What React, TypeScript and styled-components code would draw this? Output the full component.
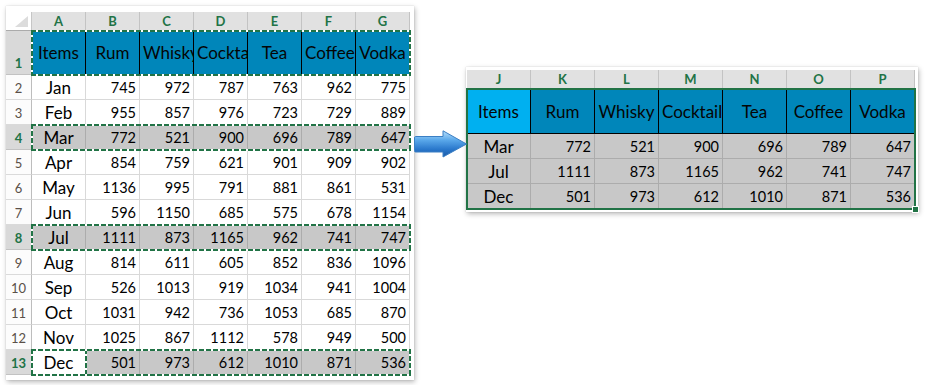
import React from "react";
import styled, { createGlobalStyle, css } from "styled-components";

const GREEN = "#217346";
const BLUE = "#0086BA";
const LIGHT_BLUE = "#00B0F0";
const SEL_GRAY = "#C8C8C8";

const Global = createGlobalStyle`
  html, body { margin: 0; padding: 0; background: #fff; }
  body { font-family: Lato, "Liberation Sans", sans-serif; }
`;

type Pos = { $r: number; $c: number };
const place = css<Pos>`
  grid-row: ${(p) => p.$r};
  grid-column: ${(p) => p.$c};
`;

const Page = styled.div`
  display: flex;
  align-items: flex-start;
  padding: 6px 0 0 6px;
  width: 926px;
  height: 385px;
  box-sizing: border-box;
  overflow: hidden;
`;

const Sheet = styled.div<{ $cols: string; $rows: string }>`
  display: grid;
  grid-template-columns: ${(p) => p.$cols};
  grid-template-rows: ${(p) => p.$rows};
  background: #fff;
  box-shadow: 1px 2px 5px rgba(0, 0, 0, 0.28), 0 0 1px rgba(0, 0, 0, 0.2);
  flex: none;
`;

const LeftSheet = styled(Sheet)`
  padding: 6px 4px 5px 0;
`;

const RightSheet = styled(Sheet)`
  margin-top: 61px;
  padding: 3px 3px 3px 1px;
`;

const Corner = styled.div<Pos>`
  ${place};
  background: #fff;
  border-right: 1px solid #c6c6c6;
  border-bottom: 1px solid #ababab;
  position: relative;
  &::after {
    content: "";
    position: absolute;
    right: 3px;
    bottom: 3px;
    width: 13px;
    height: 11px;
    background: #dcdcdc;
    clip-path: polygon(100% 0, 100% 100%, 0 100%);
  }
`;

const ColHead = styled.div<Pos>`
  ${place};
  background: #e1e1e1;
  border-right: 1px solid #c3c3c3;
  border-bottom: 1px solid #ababab;
  color: ${GREEN};
  font-weight: 700;
  font-size: 13px;
  display: flex;
  align-items: center;
  justify-content: center;
`;

const RowHead = styled.div<Pos & { $sel?: boolean }>`
  ${place};
  background: ${(p) => (p.$sel ? "#d9d9d9" : "#fcfcfc")};
  border-right: 1px solid #bdbdbd;
  border-bottom: 1px solid ${(p) => (p.$sel ? "#c2c2c2" : "#dadada")};
  color: ${(p) => (p.$sel ? GREEN : "#5a5048")};
  font-weight: ${(p) => (p.$sel ? 700 : 400)};
  font-size: 13px;
  display: flex;
  align-items: flex-end;
  justify-content: center;
  padding-bottom: 3px;
  box-sizing: border-box;
`;

const HeadCell = styled.div<Pos & { $light?: boolean }>`
  ${place};
  background: ${(p) => (p.$light ? LIGHT_BLUE : BLUE)};
  border-right: 1px solid #000;
  border-bottom: 1px solid #000;
  color: #050505;
  font-size: 17px;
  display: flex;
  align-items: center;
  justify-content: safe center;
  padding: 0 3px;
  overflow: hidden;
  white-space: nowrap;
  box-sizing: border-box;
  min-width: 0;
`;

const Cell = styled.div<Pos & { $sel?: boolean; $label?: boolean; $active?: boolean }>`
  ${place};
  background: ${(p) => (p.$active ? "#fff" : p.$sel ? SEL_GRAY : "#fff")};
  border-right: 1px solid ${(p) => (p.$sel ? "#acacac" : "#d9d9d9")};
  border-bottom: 1px solid ${(p) => (p.$sel ? "#acacac" : "#d9d9d9")};
  color: #000;
  font-size: ${(p) => (p.$label ? "17px" : "14.5px")};
  display: flex;
  align-items: center;
  justify-content: ${(p) => (p.$label ? "center" : "flex-end")};
  padding: 1px 3px 0 3px;
  white-space: nowrap;
  overflow: hidden;
  box-sizing: border-box;
  min-width: 0;
`;

const Marquee = styled.div<{ $area: string }>`
  grid-area: ${(p) => p.$area};
  position: relative;
  pointer-events: none;
  z-index: 2;
  &::before {
    content: "";
    position: absolute;
    inset: -1px;
    background:
      repeating-linear-gradient(90deg, ${GREEN} 0 5px, #fff 5px 7px) top left / 100% 2px no-repeat,
      repeating-linear-gradient(90deg, ${GREEN} 0 5px, #fff 5px 7px) bottom left / 100% 2px no-repeat,
      repeating-linear-gradient(180deg, ${GREEN} 0 5px, #fff 5px 7px) top left / 2px 100% no-repeat,
      repeating-linear-gradient(180deg, ${GREEN} 0 5px, #fff 5px 7px) top right / 2px 100% no-repeat;
  }
`;

const Selection = styled.div<{ $area: string }>`
  grid-area: ${(p) => p.$area};
  position: relative;
  pointer-events: none;
  z-index: 2;
  &::before {
    content: "";
    position: absolute;
    inset: -1px;
    border: 2px solid ${GREEN};
  }
  &::after {
    content: "";
    position: absolute;
    right: -4px;
    bottom: -4px;
    width: 5px;
    height: 5px;
    background: ${GREEN};
    border: 1px solid #fff;
  }
`;

const ArrowBox = styled.div`
  width: 52px;
  height: 28px;
  margin-top: 124px;
  flex: none;
  position: relative;
  z-index: 3;
  svg {
    display: block;
    overflow: visible;
  }
`;

const leftCols = ["A", "B", "C", "D", "E", "F", "G"];
const rightCols = ["J", "K", "L", "M", "N", "O", "P"];
const headers = ["Items", "Rum", "Whisky", "Cocktail", "Tea", "Coffee", "Vodka"];

const data: [string, number[]][] = [
  ["Jan", [745, 972, 787, 763, 962, 775]],
  ["Feb", [955, 857, 976, 723, 729, 889]],
  ["Mar", [772, 521, 900, 696, 789, 647]],
  ["Apr", [854, 759, 621, 901, 909, 902]],
  ["May", [1136, 995, 791, 881, 861, 531]],
  ["Jun", [596, 1150, 685, 575, 678, 1154]],
  ["Jul", [1111, 873, 1165, 962, 741, 747]],
  ["Aug", [814, 611, 605, 852, 836, 1096]],
  ["Sep", [526, 1013, 919, 1034, 941, 1004]],
  ["Oct", [1031, 942, 736, 1053, 685, 870]],
  ["Nov", [1025, 867, 1112, 578, 949, 500]],
  ["Dec", [501, 973, 612, 1010, 871, 536]],
];

const picked = ["Mar", "Jul", "Dec"];

function Arrow() {
  return (
    <svg width="53" height="28" viewBox="0 0 53 28">
      <defs>
        <linearGradient id="arrowFill" x1="0" y1="0" x2="0" y2="1">
          <stop offset="0" stopColor="#b9e0fb" />
          <stop offset="0.35" stopColor="#5aa8ea" />
          <stop offset="0.7" stopColor="#2a78cc" />
          <stop offset="1" stopColor="#1a5aa6" />
        </linearGradient>
      </defs>
      <path
        d="M1.5 6.5 Q0.5 6.5 0.5 8 L0.5 20.5 Q0.5 22 1.5 22 L29 22 L29 27 L52.5 14 L29 0.8 L29 6.5 Z"
        fill="url(#arrowFill)"
        stroke="#3b7fc4"
        strokeWidth="1"
        strokeLinejoin="round"
      />
    </svg>
  );
}

export default function App() {
  const rightRows = data.filter(([m]) => picked.includes(m));
  return (
    <>
      <Global />
      <Page>
        <LeftSheet $cols="26px repeat(7, 54px)" $rows="19px 44px repeat(12, 25px)">
          <Corner $r={1} $c={1} />
          {leftCols.map((c, j) => (
            <ColHead key={c} $r={1} $c={j + 2}>
              {c}
            </ColHead>
          ))}
          <RowHead $sel $r={2} $c={1}>
            1
          </RowHead>
          {headers.map((h, j) => (
            <HeadCell key={h} $r={2} $c={j + 2}>
              {h}
            </HeadCell>
          ))}
          {data.map(([m, vals], i) => {
            const sel = picked.includes(m);
            const active = m === "Dec";
            const r = i + 3;
            return (
              <React.Fragment key={m}>
                <RowHead $sel={sel} $r={r} $c={1}>
                  {i + 2}
                </RowHead>
                <Cell $sel={sel} $label $active={active} $r={r} $c={2}>
                  {m}
                </Cell>
                {vals.map((v, j) => (
                  <Cell key={j} $sel={sel} $r={r} $c={j + 3}>
                    {v}
                  </Cell>
                ))}
              </React.Fragment>
            );
          })}
          <Marquee $area="2 / 2 / 3 / 9" />
          <Marquee $area="5 / 2 / 6 / 9" />
          <Marquee $area="9 / 2 / 10 / 9" />
          <Marquee $area="14 / 2 / 15 / 9" />
          <Marquee $area="14 / 2 / 15 / 3" />
        </LeftSheet>

        <ArrowBox>
          <Arrow />
        </ArrowBox>

        <RightSheet $cols="repeat(7, 64px)" $rows="19px 45px repeat(3, 25px)">
          {rightCols.map((c, j) => (
            <ColHead key={c} $r={1} $c={j + 1}>
              {c}
            </ColHead>
          ))}
          {headers.map((h, j) => (
            <HeadCell key={h} $light={j === 0} $r={2} $c={j + 1}>
              {h}
            </HeadCell>
          ))}
          {rightRows.map(([m, vals], i) => (
            <React.Fragment key={m}>
              <Cell $sel $label $r={i + 3} $c={1}>
                {m}
              </Cell>
              {vals.map((v, j) => (
                <Cell key={j} $sel $r={i + 3} $c={j + 2}>
                  {v}
                </Cell>
              ))}
            </React.Fragment>
          ))}
          <Selection $area="2 / 1 / 6 / 8" />
        </RightSheet>
      </Page>
    </>
  );
}
